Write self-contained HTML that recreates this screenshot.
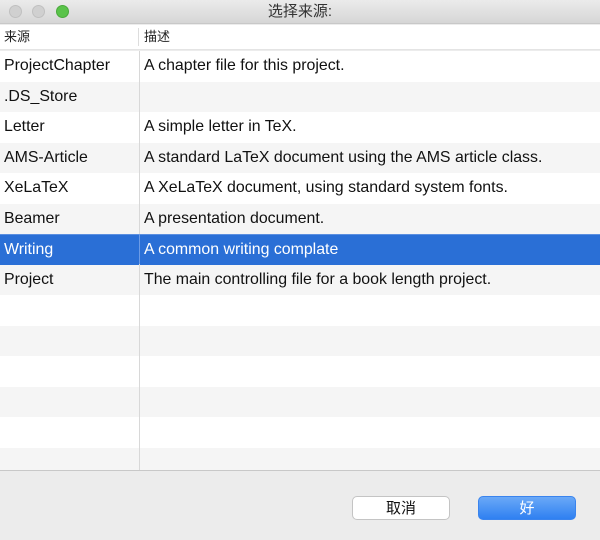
<!DOCTYPE html>
<html><head><meta charset="utf-8"><style>
*{margin:0;padding:0;box-sizing:border-box}
body{width:600px;height:540px;overflow:hidden;background:#ececec;font-family:"Liberation Sans","Noto Sans CJK SC",sans-serif;position:relative}
.title{position:absolute;left:0;top:0;width:600px;height:24px;background:linear-gradient(#ebebeb,#d6d6d6);border-bottom:1px solid #c8c8c8;text-align:center;font-size:15px;line-height:24px;color:#333}
.dot{position:absolute;top:5px;width:13px;height:13px;border-radius:50%;background:#d0d0d0;border:1px solid #c0c0c0}
.hdr{position:absolute;top:25px;left:0;width:600px;height:25px;background:#fff;border-bottom:1px solid #e4e4e4;font-size:13px;line-height:24px;color:#222}
.tbl{position:absolute;top:51px;left:0;width:600px;height:420px;background:#fff;overflow:hidden;border-bottom:1px solid #c8c8c8}
.r{height:30.5px;font-size:15.9px;line-height:30px;color:#111;position:relative}
.r:nth-child(even){background:#f5f5f5}
.r span{position:absolute;top:0}
.a{left:4px}.b{left:144px}
.sel{background:#2a6fd6!important;color:#fff;border-top:1px solid #5b8fe0}
.vl{position:absolute;left:139px;top:0;width:1px;height:420px;background:#d8d8d8}
.btn{position:absolute;top:496px;width:98px;height:24px;border-radius:5px;font-size:15px;text-align:center;line-height:23px}
</style></head><body>
<div class="title">选择来源:
<div class="dot" style="left:9px"></div><div class="dot" style="left:32px"></div><div class="dot" style="left:56px;background:#5ac34a;border-color:#4aa93c"></div></div>
<div class="hdr"><span style="position:absolute;left:4px">来源</span><span style="position:absolute;left:138px;top:3px;width:1px;height:18px;background:#ddd"></span><span style="position:absolute;left:144px">描述</span></div>
<div class="tbl">
<div class="r"><span class="a">ProjectChapter</span><span class="b">A chapter file for this project.</span></div>
<div class="r"><span class="a">.DS_Store</span></div>
<div class="r"><span class="a">Letter</span><span class="b">A simple letter in TeX.</span></div>
<div class="r"><span class="a">AMS-Article</span><span class="b">A standard LaTeX document using the AMS article class.</span></div>
<div class="r"><span class="a">XeLaTeX</span><span class="b">A XeLaTeX document, using standard system fonts.</span></div>
<div class="r"><span class="a">Beamer</span><span class="b">A presentation document.</span></div>
<div class="r sel"><span class="a">Writing</span><span class="b">A common writing complate</span></div>
<div class="r"><span class="a">Project</span><span class="b">The main controlling file for a book length project.</span></div>
<div class="r"></div><div class="r"></div><div class="r"></div><div class="r"></div><div class="r"></div><div class="r"></div>
<div class="vl"></div>
<div style="position:absolute;left:139px;top:183px;width:1px;height:30px;background:#6c9be6"></div>
</div>
<div class="btn" style="left:352px;background:#fff;border:1px solid #c4c4c4;color:#111">取消</div>
<div class="btn" style="left:478px;background:linear-gradient(#6aa9f7,#2f80f1);border:1px solid #3a84ee;color:#fff">好</div>
</body></html>
